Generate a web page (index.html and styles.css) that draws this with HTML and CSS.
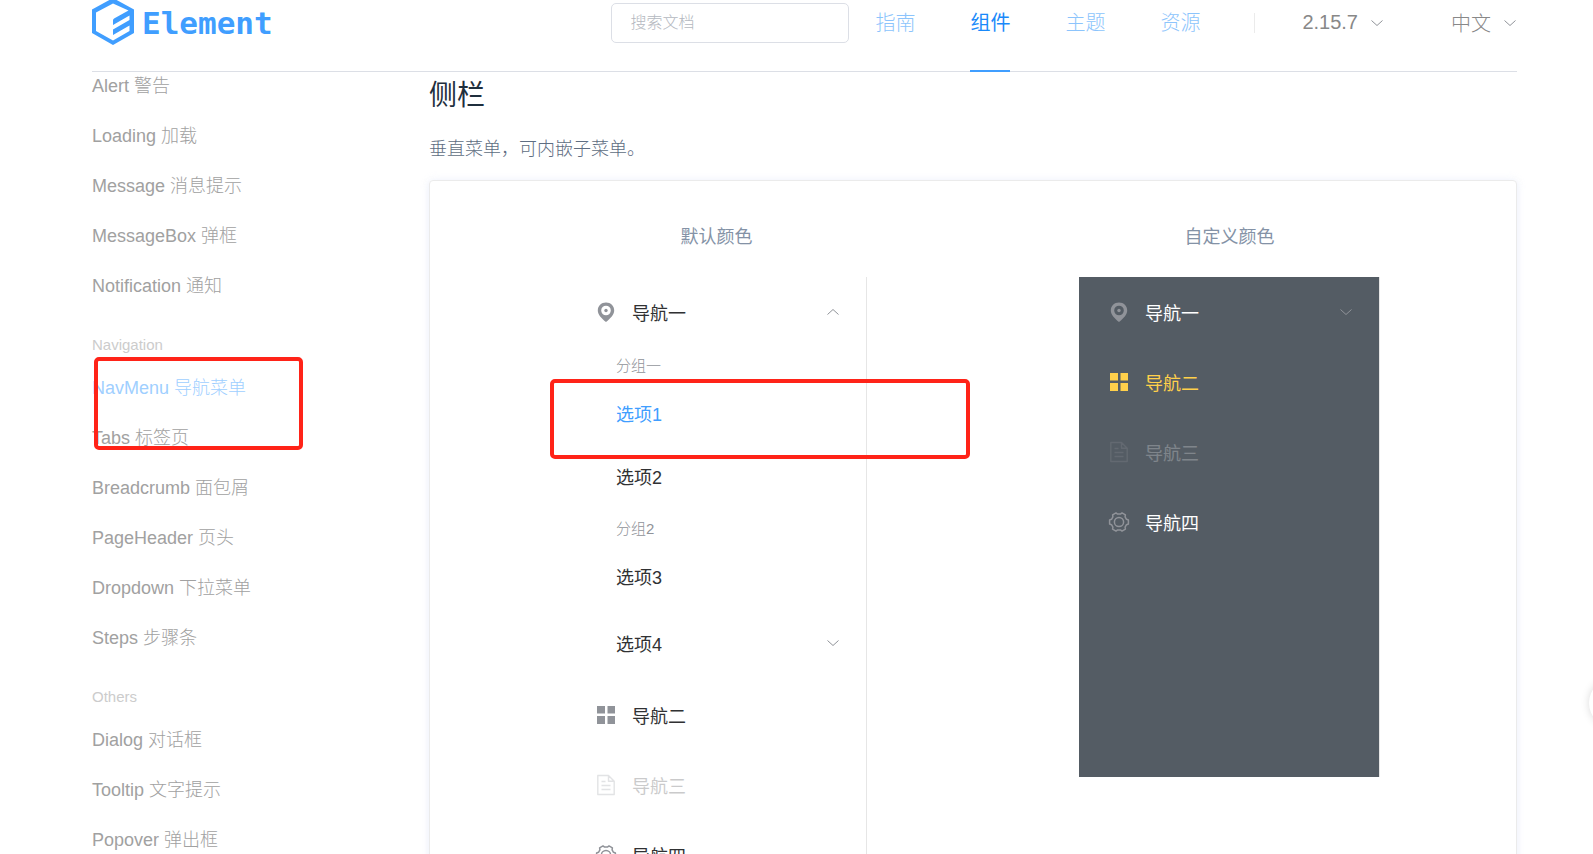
FILE: index.html
```html
<!DOCTYPE html>
<html lang="zh-CN">
<head>
    <meta charset="UTF-8">
    <meta name="viewport" content="width=device-width, initial-scale=1.0">
    <title>Element - NavMenu 导航菜单</title>
    <link rel="stylesheet" href="styles.css">
</head>
<body>

    <!-- Shared icons -->
    <svg class="icon-defs" aria-hidden="true">
        <symbol id="icon-arrow" viewBox="0 0 14 14">
            <path d="M1.5 4.5 L7 9.5 L12.5 4.5" fill="none" stroke="currentColor" stroke-width="1"/>
        </symbol>
        <symbol id="icon-location" viewBox="0 0 24 24">
            <path fill="currentColor" fill-rule="evenodd" d="M12 2.5 C7.2 2.5 3.8 6 3.8 10.4 C3.8 14.6 7.5 18.2 12 22 C16.500 18.2 20.200 14.6 20.200 10.400 C20.200 6 16.800 2.500 12 2.500 Z M12 5.700 A4.800 4.800 0 1 1 12 15.300 A4.800 4.800 0 1 1 12 5.700 Z"/>
            <circle cx="12" cy="10.500" r="1.700" fill="currentColor"/>
        </symbol>
        <symbol id="icon-menu" viewBox="0 0 24 24">
            <path fill="currentColor" d="M3 3h8v7.500H3z M13.500 3h7.500v7.500h-7.500z M3 13h8v8H3z M13.500 13h7.500v8h-7.500z"/>
        </symbol>
        <symbol id="icon-document" viewBox="0 0 24 24">
            <path fill="none" stroke="currentColor" stroke-width="1.400" stroke-linejoin="round" d="M3.800 2.500 H14.500 L20.200 8.200 V21.500 H3.800 Z M14.500 2.500 V8.200 H20.200 M7.500 8.500 h4 M7.500 12.500 h9 M7.500 16.500 h9"/>
        </symbol>
        <symbol id="icon-setting" viewBox="0 0 24 24">
            <path fill="none" stroke="currentColor" stroke-width="1.500" stroke-linejoin="round" d="M21.400 10 V14 L19.500 14.700 L18.100 17.100 L18.400 19.100 L15 21.100 L13.400 19.900 H10.600 L9 21.100 L5.600 19.100 L5.900 17.100 L4.500 14.700 L2.600 14 V10 L4.500 9.300 L5.900 6.900 L5.600 4.900 L9 2.900 L10.600 4.100 H13.400 L15 2.900 L18.400 4.900 L18.100 6.900 L19.500 9.300 Z"/>
            <circle cx="12" cy="12" r="4.600" fill="none" stroke="currentColor" stroke-width="1.500"/>
        </symbol>
    </svg>

    <!-- Header -->
    <header class="header">
        <div class="header-inner">
            <a class="logo" href="#">
                <svg class="logo-mark" viewBox="0 0 42 46" aria-hidden="true">
                    <path fill="#409eff" fill-rule="evenodd" d="M21 -2 L42 9.500 V33 L21 45 L0 33 V9.500 Z M21 3.500 L4 12.500 V31 L21 40.500 L37.500 31 V25.500 L21 35 V29.500 L37.500 20 V15.500 L21 25 V20.500 C21 19.500 21.500 18.800 22.500 18.200 L36.500 10.500 Z"/>
                </svg>
                <span>Element</span>
            </a>
            <input class="search" type="text" placeholder="搜索文档" aria-label="搜索文档">
            <nav class="top-nav">
                <a href="#">指南</a>
                <a class="active" href="#">组件</a>
                <a href="#">主题</a>
                <a href="#">资源</a>
            </nav>
            <div class="divider"></div>
            <button class="picker version" type="button">2.15.7 <svg class="arrow"><use href="#icon-arrow"/></svg></button>
            <button class="picker lang" type="button">中文 <svg class="arrow"><use href="#icon-arrow"/></svg></button>
        </div>
    </header>

    <div class="page">
        <!-- Component list -->
        <aside class="side-nav">
            <ul>
                <li><a href="#">Alert 警告</a></li>
                <li><a href="#">Loading 加载</a></li>
                <li><a href="#">Message 消息提示</a></li>
                <li><a href="#">MessageBox 弹框</a></li>
                <li><a href="#">Notification 通知</a></li>
            </ul>
            <div class="side-title">Navigation</div>
            <ul>
                <li><a class="active" href="#">NavMenu 导航菜单</a><span class="mark mark-side"></span></li>
                <li><a href="#">Tabs 标签页</a></li>
                <li><a href="#">Breadcrumb 面包屑</a></li>
                <li><a href="#">PageHeader 页头</a></li>
                <li><a href="#">Dropdown 下拉菜单</a></li>
                <li><a href="#">Steps 步骤条</a></li>
            </ul>
            <div class="side-title">Others</div>
            <ul>
                <li><a href="#">Dialog 对话框</a></li>
                <li><a href="#">Tooltip 文字提示</a></li>
                <li><a href="#">Popover 弹出框</a></li>
            </ul>
        </aside>

        <!-- Demo -->
        <main class="content">
            <h3>侧栏</h3>
            <p>垂直菜单，可内嵌子菜单。</p>
            <div class="demo">
                <section class="demo-col">
                    <h5>默认颜色</h5>
                    <ul class="menu">
                        <li>
                            <a class="item" href="#"><svg class="icon"><use href="#icon-location"/></svg>导航一<svg class="arrow open"><use href="#icon-arrow"/></svg></a>
                            <div class="group-title">分组一</div>
                            <ul>
                                <li><a class="sub-item active" href="#">选项1</a><span class="mark mark-menu"></span></li>
                                <li><a class="sub-item" href="#">选项2</a></li>
                            </ul>
                            <div class="group-title">分组2</div>
                            <ul>
                                <li><a class="sub-item" href="#">选项3</a></li>
                            </ul>
                            <a class="item nested" href="#">选项4<svg class="arrow"><use href="#icon-arrow"/></svg></a>
                        </li>
                        <li><a class="item" href="#"><svg class="icon"><use href="#icon-menu"/></svg>导航二</a></li>
                        <li><a class="item disabled" href="#"><svg class="icon"><use href="#icon-document"/></svg>导航三</a></li>
                        <li><a class="item" href="#"><svg class="icon"><use href="#icon-setting"/></svg>导航四</a></li>
                    </ul>
                </section>
                <section class="demo-col">
                    <h5>自定义颜色</h5>
                    <ul class="menu dark">
                        <li><a class="item" href="#"><svg class="icon"><use href="#icon-location"/></svg>导航一<svg class="arrow"><use href="#icon-arrow"/></svg></a></li>
                        <li><a class="item active" href="#"><svg class="icon"><use href="#icon-menu"/></svg>导航二</a></li>
                        <li><a class="item disabled" href="#"><svg class="icon"><use href="#icon-document"/></svg>导航三</a></li>
                        <li><a class="item" href="#"><svg class="icon"><use href="#icon-setting"/></svg>导航四</a></li>
                    </ul>
                </section>
            </div>
        </main>
    </div>

    <button class="float-button" type="button" aria-label="More"></button>

</body>
</html>
```
FILE: styles.css
```css
/* Reset default margin/padding */
* {
    margin: 0;
    padding: 0;
    box-sizing: border-box;
}

body {
    height: 100vh;
    overflow: hidden;
    background: #fff;
    font-family: "Liberation Sans", "Noto Sans CJK SC", sans-serif;
    font-size: 18px;
    font-weight: 300;
}

ul {
    list-style: none;
}

a {
    color: inherit;
    text-decoration: none;
}

button,
input {
    font: inherit;
}

.icon-defs {
    position: absolute;
    width: 0;
    height: 0;
}

/* Header */
.header {
    position: fixed;
    top: 0;
    left: 0;
    right: 0;
    z-index: 10;
    padding: 0 76px 0 92px;
    background: #fff;
}

.header-inner {
    display: flex;
    height: 72px;
    padding-bottom: 26px;
    align-items: center;
    border-bottom: 1px solid #dcdfe6;
}

.logo {
    display: flex;
    align-items: center;
    gap: 8px;
    margin-right: auto;
    color: #409eff;
    font-family: "DejaVu Sans Mono", monospace;
    font-size: 31px;
    font-weight: bold;
}

.logo-mark {
    width: 42px;
    height: 46px;
}

.search {
    width: 238px;
    height: 40px;
    margin-right: 26px;
    padding: 0 18px;
    border: 1px solid #dcdfe6;
    border-radius: 5px;
    font-size: 16px;
    outline: none;
}

.search::placeholder {
    color: #b4b8c0;
}

.top-nav {
    display: flex;
    gap: 55px;
    color: #8cc4fc;
    font-size: 20px;
    line-height: 44px;
}

.top-nav a {
    position: relative;
}

.top-nav .active {
    color: #1989fa;
    font-weight: 400;
}

/* Line under the current section */
.top-nav .active::after {
    content: '';
    position: absolute;
    left: 0;
    right: 0;
    bottom: -27px;
    height: 2px;
    background: #409eff;
}

.divider {
    width: 1px;
    height: 20px;
    margin: 0 47px 0 54px;
    background: #ebebeb;
}

.picker {
    display: flex;
    align-items: center;
    gap: 12px;
    border: none;
    background: none;
    color: #888;
    font-size: 20px;
    cursor: pointer;
}

.lang {
    margin-left: 67px;
}

.arrow {
    width: 14px;
    height: 14px;
    color: #909399;
}

/* Page body */
.page {
    display: flex;
    padding: 61px 76px 0 92px;
}

.side-nav {
    flex: none;
    width: 337px;
    color: #a1a1a1;
    line-height: 50px;
}

.side-nav li {
    position: relative;
}

.side-nav a {
    display: block;
}

.side-nav .active {
    color: #9fcfff;
}

.side-title {
    margin: 18px 0 2px;
    color: #ccc;
    font-size: 15px;
    line-height: 32px;
}

.content {
    flex: 1;
    padding-top: 15px;
}

.content h3 {
    color: #1f2f3d;
    font-size: 28px;
    font-weight: 400;
    line-height: 40px;
}

.content p {
    margin: 18px 0 16px;
    color: #5e6d82;
    line-height: 30px;
}

.demo {
    display: flex;
    padding: 30px;
    border: 1px solid #ebebeb;
    border-radius: 4px;
    box-shadow: 0 0 10px rgba(232, 237, 250, 0.6), 0 2px 5px rgba(232, 237, 250, 0.5);
}

.demo-col {
    display: flex;
    flex: 1;
    flex-direction: column;
    align-items: center;
}

.demo-col h5 {
    margin: 11px 0 25px;
    color: #8492a6;
    font-size: 18px;
    font-weight: 400;
    line-height: 30px;
}

/* Menu */
.menu {
    width: 301px;
    border-right: 1px solid #e6e6e6;
    color: #303133;
    font-weight: 400;
}

.menu li {
    position: relative;
}

.item {
    display: flex;
    align-items: center;
    height: 70px;
    padding: 0 26px 0 28px;
}

.item .icon {
    width: 24px;
    height: 24px;
    margin-right: 14px;
    color: #909399;
}

.item .arrow {
    margin-left: auto;
}

.arrow.open {
    transform: rotate(180deg);
}

.nested,
.sub-item {
    padding-left: 50px;
}

.nested {
    height: 66px;
    margin-bottom: 4px;
}

.sub-item {
    display: block;
    line-height: 63px;
}

.sub-item.active {
    color: #409eff;
}

.group-title {
    padding-left: 50px;
    color: #909399;
    font-size: 15px;
    font-weight: 300;
    line-height: 37px;
}

.disabled {
    opacity: 0.25;
}

.dark {
    height: 500px;
    background: #545c64;
    color: #fff;
}

.dark .active,
.dark .active .icon {
    color: #ffd04b;
}

/* Red frames around the two highlighted entries */
.mark {
    position: absolute;
    z-index: 2;
    border: 4px solid #ff2318;
    border-radius: 5px;
    pointer-events: none;
}

.mark-side {
    top: -6px;
    left: 2px;
    width: 209px;
    height: 93px;
}

.mark-menu {
    top: -5px;
    left: -16px;
    width: 420px;
    height: 80px;
}

/* Round button tucked into the window edge */
.float-button {
    position: fixed;
    right: -46px;
    bottom: 126px;
    width: 50px;
    height: 50px;
    border: none;
    border-radius: 50%;
    background: #fff;
    box-shadow: 0 0 8px rgba(0, 0, 0, 0.15);
}
```
